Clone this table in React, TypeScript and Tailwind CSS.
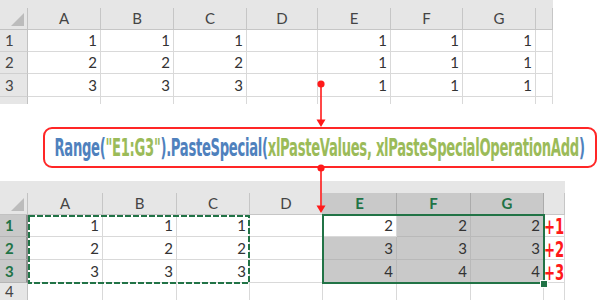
import React from 'react';

type Val = number | '';

const topRows: Val[][] = [
  [1, 1, 1, '', 1, 1, 1],
  [2, 2, 2, '', 1, 1, 1],
  [3, 3, 3, '', 1, 1, 1],
];

const bottomRows: Val[][] = [
  [1, 1, 1, '', 2, 2, 2],
  [2, 2, 2, '', 3, 3, 3],
  [3, 3, 3, '', 4, 4, 4],
];

const letters = ['A', 'B', 'C', 'D', 'E', 'F', 'G', ''];

const Corner = () => (
  <div className="relative bg-[#e6e6e6] border-r border-b border-[#c2c2c2]">
    <svg className="absolute right-[3px] bottom-[3px]" width="13" height="13" viewBox="0 0 13 13">
      <path d="M13 0V13H0Z" fill="#bcbcbc" />
    </svg>
  </div>
);

const ColHead = ({ label, sel }: { label: string; sel?: boolean }) => (
  <div
    className={
      sel
        ? 'flex items-center justify-center bg-[#c9c9c9] border-r border-b border-[#ababab] text-[#217346] font-bold text-[15px]'
        : 'flex items-center justify-center bg-[#e6e6e6] border-r border-b border-[#c6c6c6] text-[#444] text-[15px]'
    }
  >
    {label}
  </div>
);

const RowHead = ({ label, sel }: { label: string; sel?: boolean }) => (
  <div
    className={
      sel
        ? 'flex items-center pl-[5px] bg-[#c9c9c9] border-r-2 border-r-[#8f8f8f] border-b border-b-[#b5b5b5] text-[#217346] font-bold text-[15px]'
        : 'flex items-center pl-[5px] bg-[#e6e6e6] border-r border-r-[#c2c2c2] border-b border-b-[#d0d0d0] text-[#444] text-[15px]'
    }
  >
    {label}
  </div>
);

const Cell = ({ v, sel }: { v: Val; sel?: boolean }) => (
  <div
    className={
      sel
        ? 'flex items-center justify-end pr-[3px] bg-[#c9c9c9] border-r border-b border-[#b9b9b9] text-[#333] text-[15px]'
        : 'flex items-center justify-end pr-[3px] bg-white border-r border-b border-[#d9d9d9] text-[#333] text-[15px]'
    }
  >
    {v}
  </div>
);

const TopSheet = () => (
  <div className="w-[553px] bg-[#e6e6e6] pt-[8px]">
    <div className="grid grid-cols-[28px_73px_73px_73px_71px_73px_72px_73px_17px] grid-rows-[22px_22px_22px_23px_7px] overflow-hidden">
      <Corner />
      {letters.map((l, i) => (
        <ColHead key={i} label={l} />
      ))}
      {topRows.map((row, r) => (
        <React.Fragment key={r}>
          <RowHead label={String(r + 1)} />
          {row.map((v, c) => (
            <Cell key={c} v={v} />
          ))}
          <Cell v="" />
        </React.Fragment>
      ))}
      <div className="bg-[#e6e6e6] border-r border-[#c2c2c2]" />
      {letters.map((_, i) => (
        <div key={i} className="bg-white border-r border-[#d9d9d9]" />
      ))}
    </div>
  </div>
);

const BottomSheet = () => (
  <div className="w-[565px] bg-[#e6e6e6] pt-[12px]">
    <div className="grid grid-cols-[28px_75px_74px_73px_73px_74px_74px_73px_21px] grid-rows-[22px_22px_23px_23px_17px] overflow-hidden">
      <Corner />
      {letters.map((l, i) => (
        <ColHead key={i} label={l} sel={i >= 4 && i <= 6} />
      ))}
      {bottomRows.map((row, r) => (
        <React.Fragment key={r}>
          <RowHead label={String(r + 1)} sel />
          {row.map((v, c) => (
            <Cell key={c} v={v} sel={c >= 4 && !(r === 0 && c === 4)} />
          ))}
          <Cell v="" />
        </React.Fragment>
      ))}
      <div className="flex items-start pl-[5px] bg-[#e6e6e6] border-r border-[#c2c2c2] text-[#444] text-[15px] leading-[17px]">4</div>
      {letters.map((_, i) => (
        <div key={i} className="bg-white border-r border-[#d9d9d9]" />
      ))}
    </div>
  </div>
);

// code call shown between the two sheets
const CodeBox = () => (
  <div className="mt-[23px] mb-[13px] ml-[43px] w-[554px] h-[41px] rounded-[9px] border-2 border-[#ff2626] bg-white flex items-center justify-center overflow-hidden">
    <span className="inline-block whitespace-nowrap font-['DejaVu_Sans_Condensed',sans-serif] font-bold text-[24px] tracking-[-0.5px] scale-x-[0.61] origin-center">
      <span className="text-[#4f81bd]">Range(</span>
      <span className="text-[#9bbb59]">"E1:G3"</span>
      <span className="text-[#4f81bd]">).PasteSpecial(</span>
      <span className="text-[#9bbb59]">xlPasteValues, xlPasteSpecialOperationAdd</span>
      <span className="text-[#4f81bd]">)</span>
    </span>
  </div>
);

const Plus = ({ text, top }: { text: string; top: string }) => (
  <span
    className={`absolute left-[544px] ${top} font-['DejaVu_Sans_Condensed',sans-serif] font-bold text-[21px] leading-none text-[#ff1a1a] scale-x-[0.7] origin-left`}
  >
    {text}
  </span>
);

export default function App() {
  return (
    <div className="relative w-[600px] h-[300px] overflow-hidden bg-white font-['Lato',sans-serif]">
      <TopSheet />
      <CodeBox />
      <BottomSheet />

      {/* arrows, copy marquee and selection frame */}
      <svg className="absolute inset-0 pointer-events-none" width="600" height="300" viewBox="0 0 600 300">
        <circle cx="321" cy="84" r="3.6" fill="#ff1a1a" />
        <line x1="321" y1="84" x2="321" y2="121" stroke="#ff1a1a" strokeWidth="1.6" />
        <path d="M316.5 119.5H325.5L321 127Z" fill="#ff1a1a" />
        <circle cx="321" cy="168" r="3.6" fill="#ff1a1a" />
        <line x1="321" y1="168" x2="321" y2="207" stroke="#ff1a1a" strokeWidth="1.6" />
        <path d="M316.5 205.5H325.5L321 213Z" fill="#ff1a1a" />

        <rect x="29" y="216" width="220" height="67" fill="none" stroke="#217346" strokeWidth="2" strokeDasharray="6 2" />
        <rect x="323" y="215" width="221" height="68" fill="none" stroke="#217346" strokeWidth="2" />
        <rect x="540.5" y="280.5" width="7" height="7" fill="#217346" stroke="#fff" strokeWidth="1" />
      </svg>

      <Plus text="+1" top="top-[217px]" />
      <Plus text="+2" top="top-[240px]" />
      <Plus text="+3" top="top-[263px]" />
    </div>
  );
}
